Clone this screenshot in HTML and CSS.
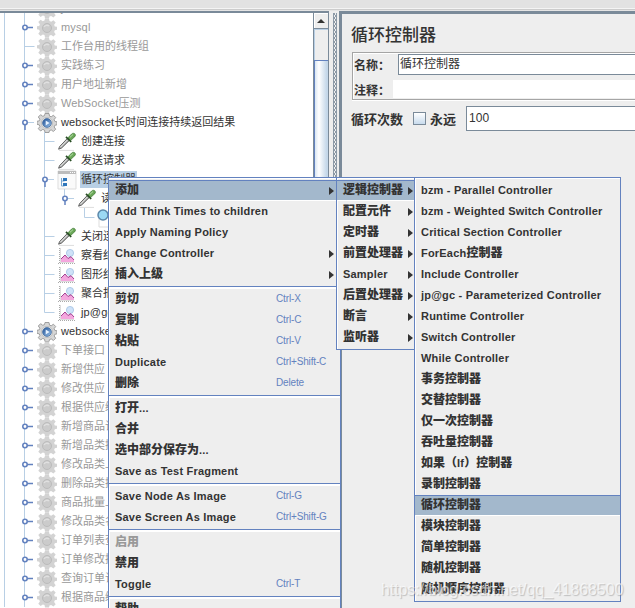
FILE: index.html
```html
<!DOCTYPE html>
<html lang="zh-CN">
<head>
<meta charset="utf-8">
<title>循环控制器</title>
<link rel="stylesheet" href="styles.css">
</head>
<body>
<svg class="defs" width="0" height="0">
  <defs>
    <linearGradient id="blue" x1="0" y1="0" x2="1" y2="1"><stop offset="0" stop-color="#1e4f94"/><stop offset="1" stop-color="#9cc4ec"/></linearGradient>
    <symbol id="teeth" viewBox="-10 -10 20 20">
      <path d="M-2-9.5h4l.5 2.6 1.7.7 2.2-1.6 2.3 2.3-1.6 2.2.7 1.7 2.2.4v3l-2.2.5-.7 1.7 1.6 2.2-2.3 2.3-2.2-1.6-1.7.7L2 9.5h-4l-.5-2.4-1.7-.7-2.2 1.6-2.3-2.3 1.6-2.2-.7-1.7-2.2-.5v-3l2.2-.4.7-1.7-1.6-2.2 2.3-2.3 2.2 1.6 1.7-.7z"/>
    </symbol>
    <symbol id="gear-off" viewBox="0 0 20 20">
      <use href="#teeth" width="20" height="20" fill="#d3d3d3"/>
      <circle cx="10" cy="10" r="4.5" fill="#cbcbcb" stroke="#bcbcbc"/>
      <path d="M7 9a3.3 3.3 0 0 1 5-1" fill="none" stroke="#e0e0e0" stroke-width="1.3"/>
    </symbol>
    <symbol id="gear-on" viewBox="0 0 20 20">
      <use href="#teeth" width="20" height="20" fill="#d6d6d6" stroke="#969696" stroke-width=".9"/>
      <circle cx="10" cy="10" r="5.6" fill="#f0f0f0" stroke="#aaa" stroke-width=".6"/>
      <circle cx="10" cy="10" r="4.4" fill="url(#blue)" stroke="#41699c" stroke-width=".8"/>
      <path d="M8.7 7.6v4.8l3.8-2.4z" fill="#e8f3ff"/>
    </symbol>
    <symbol id="dropper" viewBox="0 0 20 20">
      <path d="M2 18.4h15" stroke="#ddd"/>
      <path d="M1.6 17.2l1-2.6 8-8.4 2 2-8 7.8z" fill="#a9aba9" stroke="#555" stroke-width=".9"/>
      <path d="M3.3 15.3l7-7.2" stroke="#f4f4f4"/>
      <path d="M10.6 6.2l4-4.2c1.5-1.5 4.600-.6 3.600 2.200l-5 4.800z" fill="#6ba858" stroke="#417a38" stroke-width=".7"/>
      <path d="M9 4.800l5.200 5.200" stroke="#294d25" stroke-width="1.700"/>
      <path d="M13 5.300l3-2.700" stroke="#b4dda7"/>
    </symbol>
    <symbol id="controller" viewBox="0 0 20 20">
      <path d="M1 1h18v18H1z" fill="#fafafa" stroke="#ddd"/>
      <path d="M1 1h18v3H1z" fill="#bcbcbc"/><path d="M13 2.500h1m1 0h1m1 0h1" stroke="#fff"/>
      <path d="M4.500 8v8h3M4.500 11h3" fill="none" stroke="#7aa6cf"/>
      <path d="M6 8h4v3H6zM6 13h4v3H6z" fill="#2e76bb"/>
    </symbol>
    <symbol id="chart" viewBox="0 0 20 20">
      <path d="M2.500 2v16M1 17.500h17" stroke="#aaa" stroke-dasharray="1 1"/>
      <path d="M3.500 2v15M3 16.500h14" stroke="#ddd"/>
      <circle cx="13" cy="7" r="3.600" fill="#cfe2f8" stroke="#99bbe0" stroke-width=".7"/>
      <path d="M4 16v-3l4-4 3 3.500 3-1.800 3 3.300v2z" fill="#f4a7de"/>
      <path d="M4 13l4-4 3 3.500 3-1.800 3 3.300" fill="none" stroke="#a13f91"/>
    </symbol>
    <symbol id="magnifier" viewBox="0 0 20 20">
      <path d="M2 5h16v14H2z" fill="#fff" stroke="#ddd"/>
      <circle cx="6" cy="7" r="5" fill="#9bd8f4" stroke="#5d88aa" stroke-width="1.500"/>
    </symbol>
  </defs>
</svg>

<div class="app">
  <div class="toolbar" id="toolbar"></div>
  <div class="split">
    <div class="tree-pane">
      <div class="tree" id="tree"></div>
      <div class="scrollbar"><div class="up"><i></i></div><div class="track"></div><div class="thumb"></div></div>
    </div>
    <div class="divider"><div class="dots"></div></div>
    <div class="editor">
      <h1>循环控制器</h1>
      <div class="box">
        <div class="line"><label class="name">名称：</label><div class="field">循环控制器</div></div>
        <div class="line"><label class="comment">注释：</label><div class="plain"></div></div>
      </div>
      <div class="loops"><label>循环次数</label><span class="check"></span><label>永远</label><div class="count">100</div></div>
    </div>
  </div>
</div>

<div class="menu main" id="main"></div>
<div class="menu categories" id="categories"></div>
<div class="menu controllers" id="controllers"></div>
<div class="watermark">https://blog.csdn.net/qq_41868500</div>
<script src="script.js"></script>
</body>
</html>
```
FILE: styles.css
```css
* { box-sizing: border-box; }
body {
  margin: 0;
  width: 635px;
  height: 608px;
  overflow: hidden;
  position: relative;
  background: #eee;
  color: #333;
  font: 11px "Liberation Sans", "Noto Sans CJK SC", sans-serif;
}
.defs { position: absolute; }
.app { height: 608px; display: flex; flex-direction: column; overflow: hidden; }

.toolbar {
  height: 11px;
  flex: none;
  display: flex;
  gap: 2px;
  padding-left: 0;
  overflow: hidden;
  background: linear-gradient(#e2e2e2 0 8px, #f4f4f4 8px 9px, #ccc 9px 10px, #e4e4e4 10px);
}
.tool {
  width: 32px;
  height: 7px;
  flex: none;
  border: 1px solid #999;
  border-top: 0;
  background: #eee;
  box-shadow: 1px 1px #fff;
  display: flex;
  justify-content: center;
}
.tool:first-child { margin-left: -2px; }
.tool.gap { margin-left: 9px; }
.tool.wide { margin-left: 10px; }
.tool.off { border-color: #ccc; }
.tool svg { width: 20px; height: 4px; }

.split { flex: 1; min-height: 0; display: flex; }
.tree-pane { width: 329px; flex: none; display: flex; background: #fff; border-top: 2px solid #7a8a99; }
.tree { width: 313px; flex: none; overflow: hidden; }
.tree-row { height: 19px; display: flex; align-items: center; white-space: nowrap; }
.tree-row:first-child { margin-top: -14px; }
.cell { width: 20px; height: 19px; flex: none; overflow: visible; }
.icon { width: 20px; height: 20px; flex: none; margin: 0 3px 0 -3px; }
.tree-row span { line-height: 17px; padding: 0 1px; letter-spacing: .15px; }
.tree-row b { font-weight: 400; letter-spacing: 0; }
.tree-row.disabled { color: #999; }
.tree-row.selected span { background: #b8cfe5; }

.scrollbar { width: 16px; display: flex; flex-direction: column; border-left: 1px solid #7a8a99; border-right: 1px solid #7a8a99; }
.up { height: 16px; flex: none; background: #eee; border-bottom: 1px solid #7a8a99; box-shadow: inset 1px 1px #fff; display: flex; justify-content: center; align-items: center; }
.up i { border: 4px solid transparent; border-top: 0; border-bottom: 4px solid #333; }
.track { height: 31px; flex: none; background: #eee; border: 1px solid #b8cfe5; border-width: 1px 0 0 1px; }
.thumb { flex: 1; border-top: 1px solid #6382bf; border-left: 1px solid #6382bf; background: linear-gradient(90deg, #d9e6f2, #fff 30%, #c4d7e9 90%); }

.divider { width: 10px; flex: none; padding: 2px 2px 0 4px; }
.dots { height: 100%; background: radial-gradient(circle at 1px 1px, #8593a1 .7px, transparent .8px) 0 0 / 3px 4px, radial-gradient(circle at 1px 1px, #8593a1 .7px, transparent .8px) 2px 2px / 3px 4px; }

.editor { flex: 1; min-width: 0; border-left: 3px solid #7a8a99; border-top: 3px solid #7a8a99; padding: 10px 0 0 10px; overflow: hidden; }
h1 { margin: 0 0 5px -1px; height: 23px; line-height: 23px; font-size: 17px; font-weight: 500; }
.box { width: 300px; height: 48px; border: 1px solid #a5a5a5; box-shadow: inset 1px 1px #fff, 0 1px #fff; padding: 1px 0 0 1px; }
.line { display: flex; align-items: center; height: 21px; }
.line + .line { margin-top: 5px; height: 18px; }
label { font-size: 12px; font-weight: 700; white-space: nowrap; }
.name { width: 44px; }
.comment { width: 39px; }
.field { flex: 1; height: 21px; line-height: 18px; border: 1px solid #7a8a99; background: #fff; padding-left: 1px; font-size: 12px; }
.plain { flex: 1; height: 18px; background: #fff; }
.loops { display: flex; align-items: center; margin-top: 6px; height: 25px; width: 400px; }
.loops label { font-size: 13px; margin-left: -1px; }
.check { width: 13px; height: 13px; border: 1px solid #7a8a99; background: linear-gradient(#fff, #c8dbed); margin: 0 5px 0 10px; }
.count { width: 200px; height: 25px; line-height: 23px; margin-left: 10px; border: 1px solid #7a8a99; background: #fff; padding-left: 2px; font-size: 12px; }

.menu {
  position: absolute;
  top: 177px;
  border: 1px solid #6382bf;
  box-shadow: inset 1px 1px #fff;
  background: #eee;
  padding: 2px 0 1px;
  font-weight: 700;
}
.main { left: 108px; width: 233px; }
.categories { left: 336px; width: 79px; }
.controllers { left: 414px; width: 207px; }
.item { height: 21px; display: flex; align-items: center; padding: 0 6px; white-space: nowrap; border: 1px solid transparent; border-width: 1px 0; letter-spacing: .2px; }
.item b { font-size: 12px; letter-spacing: 0; }
.item span { flex: 1; line-height: 19px; }
.item.selected { background: #a3b8cc; border-top-color: #6382bf; border-bottom-color: #fff; }
.item.disabled { color: #999; }
.item kbd { width: 58px; font: 10px/16px "Liberation Sans", sans-serif; letter-spacing: -.15px; color: #6382bf; margin: -2px 0 0; }
.item i { border: 4px solid transparent; border-right: 0; border-left: 5px solid #333; }
.categories .item { padding-right: 1px; }
.separator { height: 4px; padding-top: 1px; }
.separator::before { content: ""; display: block; height: 2px; border-top: 1px solid #6382bf; background: #fff; }
.watermark {
  position: absolute;
  left: 381px;
  top: 580px;
  font-size: 16px;
  line-height: 20px;
  letter-spacing: -.1px;
  color: rgba(255, 255, 255, .65);
  text-shadow: 1px 1px 1px rgba(120, 120, 120, .4);
  white-space: nowrap;
}
```
FILE: script.js
```javascript
const wrapHan = text => text.replace(/[\u3400-\u9fff\uff00-\uffef]+/g, '<b>$&</b>');

// Toolbar: [spacing class, visible bottom edge of the icon]
const tools = [
  ['', '<path d="M1 0h18v2H1z" fill="#888"/>'], ['', '<path d="M8 0h4v2H8z" fill="#3a3"/>'],
  ['', '<path d="M1 0h18v2l-2 1H3z" fill="#a8783a"/>'], ['', '<path d="M2 0h15v2H2z" fill="#222"/>'],
  ['', '<path d="M1 0h2v2H1zM5 0h14v2H5z" fill="#322"/>'],
  ['gap', '<path d="M3 0h4v2H3zM13 0h4v2h-4z" fill="#d55"/><path d="M7 0h6v1H7z" fill="#daa"/>'],
  ['', '<path d="M4 0v2h10V0" fill="none" stroke="#888"/>'], ['', '<path d="M2 0h17q-3 3-9 3T2 0z" fill="#75450b"/>'],
  ['wide', ''], ['', ''], ['', '<path d="M9 0h3v1H9z" fill="#ccc"/>'],
  ['wide', ''], ['', '<path d="M6 0h2v1H6z" fill="#e66"/><path d="M10 0h4v2h-4z" fill="#9bd"/>'],
  ['off', '<path d="M3 0h13l-2 2H5z" fill="#bbb"/>'], ['off', '<path d="M7 0h5v1H7z" fill="#e4e4e4"/>'],
  ['wide', '<path d="M9 0h2v3H9z" fill="#3a3"/>'], ['off', ''], ['off', '']
];
toolbar.innerHTML = tools.map(([c, art]) =>
  `<div class="tool ${c}"><svg viewBox="0 0 20 4">${art}</svg></div>`).join('');

// Guide cells: v line, t branch, l last branch, c collapsed, e expanded, x expanded last, s blank
const line = d => `<path d="${d}" fill="none" stroke="#b8cfe5"/>`;
const ring = '<circle cx="5" cy="9.5" r="2.2" fill="#fff" stroke="#6382bf" stroke-width="1.6"/>';
const shapes = {
  v: line('M4.5 0v19'), s: '',
  t: line('M4.5 0v19M4.5 9.5h10'),
  l: line('M4.500 0v9.500h10'),
  c: line('M4.500 0v19') + '<path d="M7 9.500h6" stroke="#6382bf" stroke-width="1.500"/>' + ring,
  e: line('M4.500 0v19M8 9.500h6') + '<path d="M5 12v5" stroke="#6382bf" stroke-width="1.500"/>' + ring,
  x: line('M4.500 0v9M8 9.500h6') + '<path d="M5 12v4" stroke="#6382bf" stroke-width="1.500"/>' + ring
};
const rows = [
  ['vc', 'gear-off', 'jdbc', 'disabled'], ['vc', 'gear-off', 'mysql', 'disabled'],
  ['vt', 'gear-off', '工作台用的线程组', 'disabled'], ['vc', 'gear-off', '实践练习', 'disabled'],
  ['vc', 'gear-off', '用户地址新增', 'disabled'], ['vc', 'gear-off', 'WebSocket压测', 'disabled'],
  ['ve', 'gear-on', 'websocket长时间连接持续返回结果', ''],
  ['vvt', 'dropper', '创建连接', ''], ['vvt', 'dropper', '发送请求', ''],
  ['vve', 'controller', '循环控制器', 'selected'], ['vvvx', 'dropper', '读', ''],
  ['vvvsl', 'magnifier', '', ''], ['vvt', 'dropper', '关闭连接', ''],
  ['vvt', 'chart', '察看结果', ''], ['vvt', 'chart', '图形结果', ''], ['vvt', 'chart', '聚合报告', ''],
  ['vvl', 'chart', 'jp@gc', ''], ['vc', 'gear-on', 'websocket', ''],
  ...['下单接口', '新增供应', '修改供应', '根据供应编', '新增商品订', '新增品类接', '修改品类上', '删除品类接',
    '商品批量上', '修改品类名', '订单列表查', '订单修改接', '查询订单订', '根据商品编']
    .map(name => ['vc', 'gear-off', name, 'disabled'])
];
tree.innerHTML = rows.map(([guides, icon, name, state]) =>
  `<div class="tree-row ${state}">${[...guides].map(g => `<svg class="cell" viewBox="0 0 20 19">${shapes[g]}</svg>`).join('')}` +
  `<svg class="icon"><use href="#${icon}" width="20" height="20"/></svg><span>${wrapHan(name)}</span></div>`).join('');

// Menu entries: [label, shortcut or '>', state]; null is a separator
const fill = (el, items) => {
  el.innerHTML = items.map(it => it === null ? '<div class="separator"></div>' :
    `<div class="item ${it[2] || ''}"><span>${wrapHan(it[0])}</span>` +
    (it[1] === '>' ? '<i></i>' : it[1] ? `<kbd>${it[1]}</kbd>` : '') + '</div>').join('');
};
fill(main, [
  ['添加', '>', 'selected'], ['Add Think Times to children'], ['Apply Naming Policy'], ['Change Controller', '>'], ['插入上级', '>'], null,
  ['剪切', 'Ctrl-X'], ['复制', 'Ctrl-C'], ['粘贴', 'Ctrl-V'], ['Duplicate', 'Ctrl+Shift-C'], ['删除', 'Delete'], null,
  ['打开...'], ['合并'], ['选中部分保存为...'], ['Save as Test Fragment'], null,
  ['Save Node As Image', 'Ctrl-G'], ['Save Screen As Image', 'Ctrl+Shift-G'], null,
  ['启用', '', 'disabled'], ['禁用'], ['Toggle', 'Ctrl-T'], null, ['帮助']
]);
fill(categories, [
  ['逻辑控制器', '>', 'selected'], ['配置元件', '>'], ['定时器', '>'], ['前置处理器', '>'],
  ['Sampler', '>'], ['后置处理器', '>'], ['断言', '>'], ['监听器', '>']
]);
fill(controllers, [
  ['bzm - Parallel Controller'], ['bzm - Weighted Switch Controller'], ['Critical Section Controller'], ['ForEach控制器'],
  ['Include Controller'], ['jp@gc - Parameterized Controller'], ['Runtime Controller'], ['Switch Controller'], ['While Controller'],
  ['事务控制器'], ['交替控制器'], ['仅一次控制器'], ['吞吐量控制器'], ['如果（If）控制器'], ['录制控制器'],
  ['循环控制器', '', 'selected'], ['模块控制器'], ['简单控制器'], ['随机控制器'], ['随机顺序控制器']
]);
```
